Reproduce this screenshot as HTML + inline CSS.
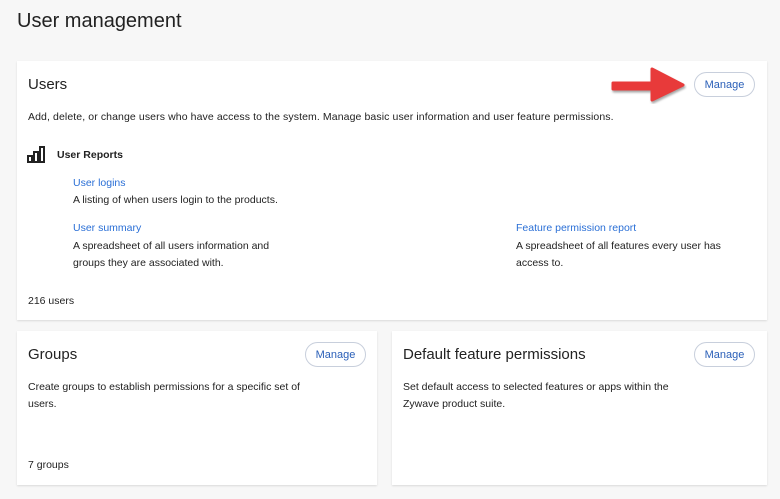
<!DOCTYPE html>
<html><head><style>
body{margin:0;width:780px;height:499px;background:#f7f7f7;font-family:"Liberation Sans",sans-serif;color:#222;position:relative;overflow:hidden}
.a{position:absolute;white-space:nowrap}
.card{position:absolute;background:#fff;box-shadow:0 1px 2px rgba(0,0,0,.12)}
.h{font-size:15px;color:#222}
.t{font-size:10.5px;color:#222}
.l{font-size:10.5px;color:#2a6fd6}
.btn{position:absolute;border:1px solid #c8cfdc;border-radius:14px;width:61px;height:25px;font-size:11px;color:#2a5fb8;text-align:center;line-height:24px;box-sizing:border-box}
</style></head><body>
<div class="a" style="left:17px;top:10px;font-size:20px;color:#222">User management</div>
<div class="card" style="left:17px;top:61px;width:750px;height:259px"></div>
<div class="card" style="left:17px;top:331px;width:360px;height:154px"></div>
<div class="card" style="left:392px;top:331px;width:375px;height:154px"></div>
<div class="a h" style="left:28px;top:76px">Users</div>
<div class="btn" style="left:694px;top:72px">Manage</div>
<svg class="a" style="left:605px;top:64px" width="82" height="40"><path d="M8 19 L47 19 L47 5 L78 21 L47 36 L47 25 L8 25 Z" fill="#e83a3a" stroke="#e83a3a" stroke-linejoin="round" stroke-width="3" style="filter:drop-shadow(1px 2px 1px rgba(0,0,0,.35))"/></svg>
<div class="a t" style="left:28px;top:111px;letter-spacing:.1px">Add, delete, or change users who have access to the system. Manage basic user information and user feature permissions.</div>
<svg class="a" style="left:27px;top:146px" width="18" height="18"><g fill="none" stroke="#222" stroke-width="2"><rect x="1" y="10" width="4" height="6"/><rect x="7" y="6" width="4" height="10"/><rect x="13" y="1" width="4" height="15"/></g></svg>
<div class="a" style="left:57px;top:149px;font-size:10.5px;font-weight:bold">User Reports</div>
<div class="a l" style="left:73px;top:177px">User logins</div>
<div class="a t" style="left:73px;top:194px">A listing of when users login to the products.</div>
<div class="a l" style="left:73px;top:222px">User summary</div>
<div class="a t" style="left:73px;top:238px;line-height:17px">A spreadsheet of all users information and<br>groups they are associated with.</div>
<div class="a l" style="left:516px;top:222px">Feature permission report</div>
<div class="a t" style="left:516px;top:238px;line-height:17px">A spreadsheet of all features every user has<br>access to.</div>
<div class="a t" style="left:28px;top:295px">216 users</div>
<div class="a h" style="left:28px;top:346px">Groups</div>
<div class="btn" style="left:305px;top:342px">Manage</div>
<div class="a t" style="left:28px;top:379px;line-height:17px">Create groups to establish permissions for a specific set of<br>users.</div>
<div class="a t" style="left:28px;top:459px">7 groups</div>
<div class="a h" style="left:403px;top:346px">Default feature permissions</div>
<div class="btn" style="left:694px;top:342px">Manage</div>
<div class="a t" style="left:403px;top:379px;line-height:17px">Set default access to selected features or apps within the<br>Zywave product suite.</div>
</body></html>
